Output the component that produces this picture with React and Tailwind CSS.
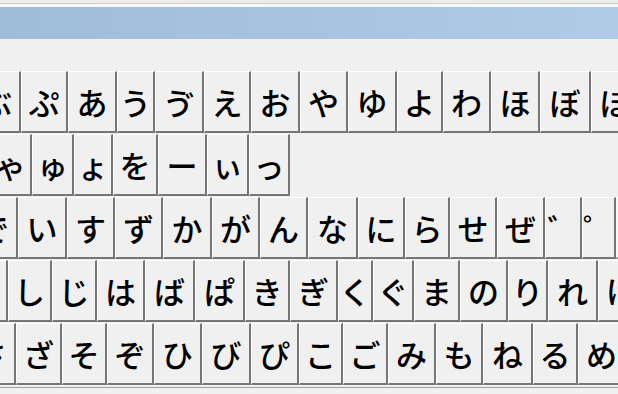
const rows = [
  {
    lead: -27,
    keys: [
      ["ぶ", 48], ["ぷ", 47], ["あ", 49], ["う", 38], ["ゔ", 49], ["え", 47], ["お", 49],
      ["や", 48], ["ゆ", 49], ["よ", 46], ["わ", 48], ["ほ", 49], ["ぼ", 51], ["ぽ", 50],
    ],
  },
  {
    lead: -10,
    keys: [["ゃ", 42], ["ゅ", 42], ["ょ", 39], ["を", 45], ["ー", 49], ["ぃ", 42], ["っ", 41]],
  },
  {
    lead: -30,
    keys: [
      ["で", 48], ["い", 49], ["す", 48], ["ず", 48], ["か", 49], ["が", 48], ["ん", 48],
      ["な", 50], ["に", 47], ["ら", 45], ["せ", 47], ["ぜ", 48], ["゛", 37], ["゜", 34], ["", 40],
    ],
  },
  {
    lead: -40,
    keys: [
      ["ぢ", 48], ["し", 44], ["じ", 45], ["は", 48], ["ば", 50], ["ぱ", 50], ["き", 45],
      ["ぎ", 48], ["く", 35], ["ぐ", 41], ["ま", 46], ["の", 48], ["り", 40], ["れ", 50], ["け", 48],
    ],
  },
  {
    lead: -32,
    keys: [
      ["さ", 48], ["ざ", 46], ["そ", 45], ["ぞ", 47], ["ひ", 48], ["び", 49], ["ぴ", 48],
      ["こ", 44], ["ご", 45], ["み", 48], ["も", 47], ["ね", 50], ["る", 45], ["め", 48],
    ],
  },
];

function Key({ label, width }) {
  return (
    <div
      className="shrink-0 h-[62px] flex items-center justify-center bg-[#f0f0f0] border-t border-l border-t-white border-l-white border-r-2 border-b-2 border-r-[#767676] border-b-[#767676] text-[31px] font-medium leading-none text-black"
      style={{ width }}
    >
      {label}
    </div>
  );
}

export default function App() {
  return (
    <div
      className="w-[618px] h-[394px] overflow-hidden bg-[#f0f0f0] flex flex-col"
      style={{ fontFamily: '"Noto Sans CJK JP", "Noto Sans", sans-serif' }}
    >
      <div className="h-[3px] bg-[#ececec]" />
      <div className="h-px bg-[#cfcfcf]" />
      <div className="h-[3px] bg-[#f7f7f7]" />
      <div className="h-[32px] bg-gradient-to-r from-[#9fbcda] to-[#b1cbe6]" />
      <div className="h-[32px]" />
      <div className="flex flex-col gap-[1px]">
        {rows.map((row, i) => (
          <div key={i} className="flex" style={{ marginLeft: row.lead }}>
            {row.keys.map(([label, w], j) => (
              <Key key={j} label={label} width={w} />
            ))}
          </div>
        ))}
      </div>
      <div className="mt-[2px] h-px bg-[#a0a0a0]" />
    </div>
  );
}
